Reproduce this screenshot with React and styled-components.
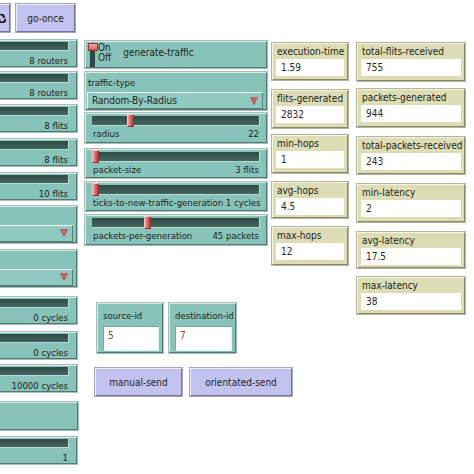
import styled, { createGlobalStyle } from "styled-components";

const GlobalStyle = createGlobalStyle`
  html, body {
    margin: 0;
    background: #ffffff;
  }
  body {
    font-family: "DejaVu Sans Condensed", "Liberation Sans", sans-serif;
    font-size: 9.5px;
    color: #1e1e1e;
    overflow: hidden;
  }
`;

const Page = styled.div`
  display: flex;
  align-items: flex-start;
  width: 474px;
  height: 474px;
  overflow: hidden;
`;

const LeftCol = styled.div`
  display: flex;
  flex-direction: column;
  width: 111px;
  margin-left: -34px;
  flex-shrink: 0;
`;

const MidCol = styled.div`
  display: flex;
  flex-direction: column;
  width: 182px;
  margin-left: 8px;
  flex-shrink: 0;
`;

const MonCol = styled.div`
  display: flex;
  flex-direction: column;
  width: ${({ $w }) => $w}px;
  margin-left: ${({ $ml }) => $ml}px;
  flex-shrink: 0;
`;

const Teal = styled.div`
  box-sizing: border-box;
  position: relative;
  margin-top: ${({ $mt }) => $mt || 0}px;
  height: ${({ $h }) => $h}px;
  width: ${({ $w }) => ($w ? `${$w}px` : "auto")};
  background: #88c3b9;
  border: 1px solid;
  border-color: #d3ece7 #4d7c75 #4d7c75 #d3ece7;
  box-shadow: 0 0 0 1px #a9bdb9;
  flex-shrink: 0;
`;

const SliderBox = styled(Teal)`
  display: flex;
  flex-direction: column;
  padding: ${({ $pt }) => $pt || 2}px ${({ $pr }) => $pr || 6}px 0 6px;
`;

const Track = styled.div`
  position: relative;
  height: 9px;
  background: linear-gradient(#2f4b47, #45655f);
  border-bottom: 1px solid #b9dcd6;
  border-right: 1px solid #b9dcd6;
`;

const Thumb = styled.div`
  position: absolute;
  top: -2px;
  width: 5px;
  height: 11px;
  background: linear-gradient(90deg, #f1a4a4, #d35c5c 60%, #b04040);
  border: 1px solid #8f3434;
  border-top-color: #f6c7c7;
  border-left-color: #f6c7c7;
`;

const SliderText = styled.div`
  display: flex;
  justify-content: space-between;
  margin-top: ${({ $mt }) => $mt || 3}px;
  padding: 0 1px;
  white-space: nowrap;
  line-height: 11px;
`;

const ChooserBox = styled(Teal)`
  display: flex;
  flex-direction: column;
  padding: 4px 3px 0 1px;
`;

const ChooserLabel = styled.div`
  height: 12px;
  line-height: 12px;
  padding-left: 1px;
`;

const Dropdown = styled.div`
  box-sizing: border-box;
  display: flex;
  align-items: center;
  justify-content: space-between;
  margin-top: ${({ $mt }) => $mt || 3}px;
  height: ${({ $h }) => $h}px;
  padding: 0 4px 0 4px;
  background: #8fc9c0;
  border: 1px solid;
  border-color: #f2fbf9 #577f79 #577f79 #f2fbf9;
  font-size: 10px;
`;

const Triangle = styled.div`
  width: 0;
  height: 0;
  border-left: 4px solid transparent;
  border-right: 4px solid transparent;
  border-top: 8px solid #c76262;
  filter: drop-shadow(0 0 0.5px #7a2e2e);
`;

const SwitchBox = styled(Teal)`
  display: flex;
  align-items: center;
  padding-left: 2px;
`;

const SwitchIcon = styled.div`
  position: relative;
  width: 10px;
  height: 24px;
  align-self: flex-start;
  margin-top: 1px;
`;

const Knob = styled.div`
  position: absolute;
  top: 0;
  left: 0;
  width: 8px;
  height: 6px;
  background: linear-gradient(#f3a9a9, #d05a5a);
  border: 1px solid #8f3434;
`;

const Post = styled.div`
  position: absolute;
  top: 8px;
  left: 2px;
  width: 5px;
  height: 16px;
  background: #2e4a46;
`;

const OnOff = styled.div`
  display: flex;
  flex-direction: column;
  align-self: flex-start;
  margin-top: 1px;
  line-height: 10px;
  font-size: 10px;
`;

const SwitchLabel = styled.div`
  margin-left: 12px;
  font-size: 10px;
  margin-bottom: 4px;
`;

const Monitor = styled.div`
  box-sizing: border-box;
  display: flex;
  flex-direction: column;
  margin-top: ${({ $mt }) => $mt}px;
  height: ${({ $h }) => $h}px;
  padding: 2px 3px 0 3px;
  background: #dcdcb5;
  border: 1px solid;
  border-color: #f5f5e4 #8a8a68 #8a8a68 #f5f5e4;
  box-shadow: 0 0 0 1px #b3b3a0;
`;

const MonLabel = styled.div`
  line-height: 11px;
  white-space: nowrap;
  padding-left: 1px;
  font-size: 10px;
`;

const MonValue = styled.div`
  box-sizing: border-box;
  margin-top: 2px;
  height: 17px;
  padding-left: 5px;
  line-height: 17px;
  background: #ffffff;
  color: #2a2a2a;
  font-size: 10px;
`;

const InputsRow = styled.div`
  display: flex;
  gap: 6px;
  margin-top: 58px;
  margin-left: 12px;
`;

const InputBox = styled(Teal)`
  display: flex;
  flex-direction: column;
  padding: 6px 3px 0 5px;
`;

const InputLabel = styled.div`
  line-height: 11px;
  white-space: nowrap;
`;

const InputField = styled.div`
  box-sizing: border-box;
  margin-top: 5px;
  height: 25px;
  padding: 3px 4px;
  background: #ffffff;
  border: 1px solid;
  border-color: #7f9f9a #e6f3f0 #e6f3f0 #7f9f9a;
  color: #8a4a26;
  font-size: 10px;
  line-height: 11px;
`;

const ButtonsRow = styled.div`
  display: flex;
  gap: ${({ $gap }) => $gap}px;
  margin-top: ${({ $mt }) => $mt}px;
  margin-left: ${({ $ml }) => $ml || 0}px;
`;

const Button = styled.div`
  box-sizing: border-box;
  display: flex;
  align-items: center;
  justify-content: ${({ $justify }) => $justify || "center"};
  padding-right: ${({ $pr }) => $pr || 0}px;
  width: ${({ $w }) => $w}px;
  height: 28px;
  background: #c2c2ee;
  border: 1px solid;
  border-color: #ececff #7474a0 #7474a0 #ececff;
  box-shadow: 0 0 0 1px #a7a7b8;
  font-size: 10px;
  flex-shrink: 0;
`;

const ForeverIcon = () => (
  <svg width="9" height="9" viewBox="0 0 9 9">
    <path d="M1 4 A3 3 0 0 1 7 3" fill="none" stroke="#111" strokeWidth="1.8" />
    <path d="M8 5 A3 3 0 0 1 2 6" fill="none" stroke="#111" strokeWidth="1.8" />
    <path d="M6 1 L8.5 3.5 L5.5 4 Z" fill="#111" />
    <path d="M3 8 L0.5 5.5 L3.5 5 Z" fill="#111" />
  </svg>
);

const Slider = ({ mt, h, label, value, pos, pr, pt, textMt }) => (
  <SliderBox $mt={mt} $h={h} $pr={pr} $pt={pt}>
    <Track>{pos !== null && <Thumb style={{ left: `${pos}%` }} />}</Track>
    <SliderText $mt={textMt}>
      <span>{label}</span>
      <span>{value}</span>
    </SliderText>
  </SliderBox>
);

const Chooser = ({ mt, h, label, value, ddMt, ddH }) => (
  <ChooserBox $mt={mt} $h={h}>
    <ChooserLabel>{label}</ChooserLabel>
    <Dropdown $mt={ddMt} $h={ddH}>
      <span>{value}</span>
      <Triangle />
    </Dropdown>
  </ChooserBox>
);

const Mon = ({ mt, h, label, value }) => (
  <Monitor $mt={mt} $h={h}>
    <MonLabel>{label}</MonLabel>
    <MonValue>{value}</MonValue>
  </Monitor>
);

// thumbs of the left column sit off-screen to the left
const leftSliders = [
  { mt: 8, value: "8 routers" },
  { mt: 5, value: "8 routers" },
  { mt: 6, value: "8 flits" },
  { mt: 7, value: "8 flits" },
  { mt: 7, value: "10 flits" },
];

const leftSliders2 = [
  { mt: 10, value: "0 cycles" },
  { mt: 8, value: "0 cycles" },
  { mt: 6, value: "10000 cycles" },
];

const monitorsA = [
  { mt: 43, h: 37, label: "execution-time", value: "1.59" },
  { mt: 10, h: 38, label: "flits-generated", value: "2832" },
  { mt: 7, h: 38, label: "min-hops", value: "1" },
  { mt: 9, h: 36, label: "avg-hops", value: "4.5" },
  { mt: 9, h: 38, label: "max-hops", value: "12" },
];

const monitorsB = [
  { mt: 43, h: 38, label: "total-flits-received", value: "755" },
  { mt: 8, h: 38, label: "packets-generated", value: "944" },
  { mt: 10, h: 37, label: "total-packets-received", value: "243" },
  { mt: 10, h: 38, label: "min-latency", value: "2" },
  { mt: 10, h: 36, label: "avg-latency", value: "17.5" },
  { mt: 9, h: 37, label: "max-latency", value: "38" },
];

export default function App() {
  return (
    <>
      <GlobalStyle />
      <Page>
        <LeftCol>
          <ButtonsRow $gap={6} $mt={4}>
            <Button $w={44} $justify="flex-end" $pr={3}>
              <ForeverIcon />
            </Button>
            <Button $w={59}>go-once</Button>
          </ButtonsRow>
          {leftSliders.map((s, i) => (
            <Slider key={i} mt={s.mt} h={27} label="" value={s.value} pos={0} pr={7} pt={1} textMt={4} />
          ))}
          <Chooser mt={6} h={37} label="" value="" ddMt={3} ddH={19} />
          <Chooser mt={7} h={37} label="" value="" ddMt={3} ddH={19} />
          {leftSliders2.map((s, i) => (
            <Slider key={i} mt={s.mt} h={27} label="" value={s.value} pos={0} pr={7} pt={1} textMt={4} />
          ))}
          <Teal $mt={10} $h={28} $w={112} />
          <Slider mt={7} h={27} label="" value="1" pos={0} pr={7} pt={1} textMt={4} />
        </LeftCol>

        <MidCol>
          <SwitchBox $mt={41} $h={27}>
            <SwitchIcon>
              <Knob />
              <Post />
            </SwitchIcon>
            <OnOff>
              <span>On</span>
              <span>Off</span>
            </OnOff>
            <SwitchLabel>generate-traffic</SwitchLabel>
          </SwitchBox>
          <Chooser mt={4} h={38} label="traffic-type" value="Random-By-Radius" ddMt={3} ddH={20} />
          <Slider mt={3} h={30} label="radius" value="22" pos={21} pr={6} pt={2} textMt={2} />
          <Slider mt={6} h={29} label="packet-size" value="3 flits" pos={0} pr={6} pt={2} textMt={2} />
          <Slider
            mt={4}
            h={29}
            label="ticks-to-new-traffic-generation 1 cycles"
            value=""
            pos={0}
            pr={6}
            pt={2}
            textMt={2}
          />
          <Slider mt={4} h={30} label="packets-per-generation" value="45 packets" pos={31} pr={6} pt={2} textMt={2} />

          <InputsRow>
            <InputBox $h={50} $w={66}>
              <InputLabel>source-id</InputLabel>
              <InputField>5</InputField>
            </InputBox>
            <InputBox $h={50} $w={67}>
              <InputLabel>destination-id</InputLabel>
              <InputField>7</InputField>
            </InputBox>
          </InputsRow>

          <ButtonsRow $gap={8} $mt={15} $ml={10}>
            <Button $w={87}>manual-send</Button>
            <Button $w={102}>orientated-send</Button>
          </ButtonsRow>
        </MidCol>

        <MonCol $w={76} $ml={5}>
          {monitorsA.map((m) => (
            <Mon key={m.label} {...m} />
          ))}
        </MonCol>

        <MonCol $w={108} $ml={9}>
          {monitorsB.map((m) => (
            <Mon key={m.label} {...m} />
          ))}
        </MonCol>
      </Page>
    </>
  );
}
